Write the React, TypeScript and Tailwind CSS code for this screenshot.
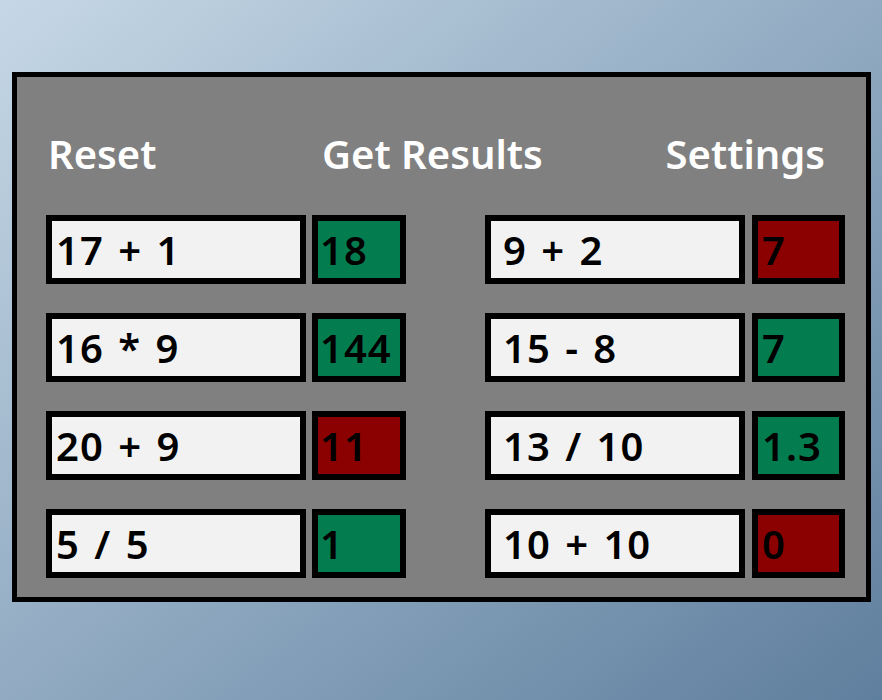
const rows: { left: [string, string, boolean]; right: [string, string, boolean] }[] = [
  { left: ["17 + 1", "18", true], right: ["9 + 2", "7", false] },
  { left: ["16 * 9", "144", true], right: ["15 - 8", "7", true] },
  { left: ["20 + 9", "11", false], right: ["13 / 10", "1.3", true] },
  { left: ["5 / 5", "1", true], right: ["10 + 10", "0", false] },
];

const Problem = ({
  question,
  answer,
  correct,
  right,
}: {
  question: string;
  answer: string;
  correct: boolean;
  right?: boolean;
}) => (
  <div className={`flex ${right ? "gap-[7px]" : "gap-[6px]"}`}>
    <div
      className={`w-[260px] h-[69px] border-[6px] border-black bg-[#f2f2f2] flex items-center leading-none whitespace-pre ${
        right ? "pl-[12px]" : "pl-[4px]"
      }`}
    >
      {question}
    </div>
    <div
      className={`h-[69px] border-[6px] border-black flex items-center leading-none ${
        right ? "w-[93px] pl-[4px]" : "w-[94px] pl-[2px]"
      } ${correct ? "bg-[#037d50]" : "bg-[#8b0000]"}`}
    >
      {answer}
    </div>
  </div>
);

export default function App() {
  return (
    <div className="h-[700px] w-full overflow-hidden bg-gradient-to-br from-[#c6d8e6] to-[#5f7f9e] pt-[72px] pl-[12px] font-['Noto_Sans',sans-serif]">
      <div className="w-[859px] h-[530px] border-[5px] border-black bg-[#808080] pl-[29px] pt-[57px]">
        {/* Header buttons */}
        <div className="flex items-center h-[40px] text-[40px] leading-none font-semibold text-white">
          <span className="w-[276px] pl-[2px]">Reset</span>
          <span>Get Results</span>
          <span className="ml-auto mr-[41px]">Settings</span>
        </div>

        {/* Problems */}
        <div className="mt-[41px] grid grid-cols-[439px_auto] gap-y-[29px] text-[40px] font-semibold tracking-[1px] [word-spacing:3px] text-black">
          {rows.map((row, i) => (
            <div key={i} className="contents">
              <Problem question={row.left[0]} answer={row.left[1]} correct={row.left[2]} />
              <Problem question={row.right[0]} answer={row.right[1]} correct={row.right[2]} right />
            </div>
          ))}
        </div>
      </div>
    </div>
  );
}
